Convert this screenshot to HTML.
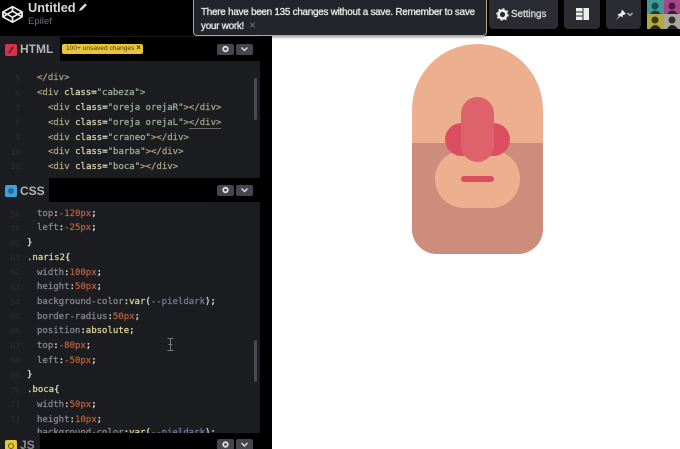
<!DOCTYPE html>
<html lang="en">
<head>
<meta charset="utf-8">
<title>Untitled</title>
<style>
html,body{margin:0;padding:0;width:680px;height:449px;overflow:hidden;background:#000;font-family:"Liberation Sans",sans-serif}
.a{position:absolute}
#p{position:relative;width:680px;height:449px;overflow:hidden;background:#000;filter:blur(.35px)}
.l{position:absolute;margin-top:1px;white-space:pre;font:9px/14px "DejaVu Sans Mono","Liberation Mono",monospace;color:#8c8b92;-webkit-text-stroke:.25px currentColor}
.n{position:absolute;width:20px;text-align:right;left:0;margin-top:1px;font:8px/14px "DejaVu Sans Mono",monospace;color:#2c2d32}
.t{color:#a9a47f}.k{color:#d8d5ae}.s{color:#9db09b}.w{color:#e4e2d8}
.o{color:#b9603a}.c{color:#dcd79b}.v{color:#77799c}.p{color:#8b8790}
.hb{position:absolute;background:#44454d;border-radius:2px;width:17px;height:11px}
.btn{position:absolute;top:0;height:29px;background:#2b2c33;border-radius:0 0 4px 4px}
</style>
</head>
<body>
<div id="p">

<!-- logo -->
<svg class="a" style="left:2px;top:5px" width="21" height="18" viewBox="0 0 22 22" preserveAspectRatio="none" fill="none" stroke="#eee" stroke-width="1.9" stroke-linejoin="round">
<path d="M11 2 21 8.500V14.500L11 21 1 14.500V8.500Z"/><path d="M11 2V7.500M11 15V21M1 8.500 11 15 21 8.500M1 14.500 11 7.500 21 14.500"/>
</svg>
<div class="a" style="left:28px;top:0;font-size:12.800px;line-height:15px;font-weight:bold;color:#d8d8da">Untitled</div>
<svg class="a" style="left:78px;top:2px" width="10" height="10" viewBox="0 0 10 10"><path d="M1 9 2 6.500 7 1.500 9 3 4 8Z" fill="#ddd"/></svg>
<div class="a" style="left:28px;top:16px;font-size:9.500px;line-height:12px;color:#70717a">Epilef</div>

<!-- top buttons -->
<div class="btn" style="left:489px;width:69px"></div>
<svg class="a" style="left:496px;top:8px" width="13" height="13" viewBox="0 0 12 12"><circle cx="6" cy="6" r="3.600" fill="none" stroke="#eee" stroke-width="2.400"/><circle cx="6" cy="6" r="5" fill="none" stroke="#eee" stroke-width="1.600" stroke-dasharray="1.800 2.100"/></svg>
<div class="a" style="left:511px;top:8px;font-size:9.800px;line-height:13px;color:#d0d0d3;-webkit-text-stroke:.4px #d0d0d3">Settings</div>
<div class="btn" style="left:564px;width:36px"></div>
<svg class="a" style="left:576px;top:8px" width="13" height="12" viewBox="0 0 13 12"><path d="M0 0H13V12H0Z" fill="#eee"/><path d="M7 0V12M0 4H7M0 8H7" stroke="#2b2c33" stroke-width="1"/></svg>
<div class="btn" style="left:606px;width:35px"></div>
<svg class="a" style="left:615px;top:9px" width="18" height="12" viewBox="0 0 18 12"><path d="M1 11 4 7 2.500 5.500 6 4 7 .5 11 5 8 6 7.500 8.500 5.500 7Z" fill="#eee"/><path d="M12.500 4 15 6.500 17.500 4" fill="none" stroke="#bbb" stroke-width="1.300"/></svg>
<!-- avatar -->
<svg class="a" style="left:647px;top:0" width="33" height="29" viewBox="0 0 33 29">
<rect width="17" height="14" fill="#3f9a9a"/><rect x="17" width="16" height="14" fill="#a8488c"/><rect y="14" width="17" height="15" fill="#b5a83c"/><rect x="17" y="14" width="16" height="15" fill="#a8a8a0"/>
<circle cx="8" cy="6" r="3.500" fill="#1d4a50"/><path d="M3 14Q8 7 14 14Z" fill="#1d3a40"/>
<circle cx="25" cy="6" r="3.500" fill="#4a1a40"/><path d="M20 14Q25 7 31 14Z" fill="#3e1c3a"/>
<circle cx="8" cy="20" r="3.500" fill="#3c3818"/><path d="M3 29Q8 21 14 29Z" fill="#2e2c14"/>
<circle cx="25" cy="20" r="3.500" fill="#303030"/><path d="M20 29Q25 21 31 29Z" fill="#222"/>
</svg>

<!-- editor column -->
<div class="a" style="left:0;top:61px;width:260px;height:388px;background:#1c1d21"></div>
<div class="a" style="left:0;top:36px;width:260px;height:1px;background:#1a1a1d"></div>

<!-- HTML header -->
<div class="a" style="left:0;top:37px;width:60px;height:24px;background:#1c1d21"></div>
<div class="a" style="left:5px;top:44px;width:12px;height:12px;border-radius:2px;background:#d8314c"></div>
<svg class="a" style="left:5px;top:44px" width="12" height="12"><path d="M4 9 8 3" stroke="#5c1020" stroke-width="1.500"/></svg>
<div class="a" style="left:20px;top:42px;font-size:12px;line-height:15px;font-weight:bold;color:#b4b4b8">HTML</div>
<div class="a" style="left:62px;top:44px;width:81px;height:10px;border-radius:2px;background:#e9c53e;color:#4a3c10;font-size:6.600px;line-height:10px;padding-left:4px;box-sizing:border-box;white-space:nowrap">100+ unsaved changes <b style="font-size:8px;line-height:8px">×</b></div>
<div class="hb" style="left:217px;top:44px"></div><div class="hb" style="left:236px;top:44px"></div>

<!-- HTML code -->
<div class="n" style="top:71px">5</div>
<div class="l" style="left:37px;top:70px"><span class="t">&lt;/div&gt;</span></div>
<div class="n" style="top:86px">6</div>
<div class="l" style="left:37px;top:85px"><span class="t">&lt;div</span> <span class="k">class</span><span class="w">=</span><span class="s">"cabeza"</span><span class="t">&gt;</span></div>
<div class="n" style="top:101px">7</div>
<div class="l" style="left:48px;top:100px"><span class="t">&lt;div</span> <span class="k">class</span><span class="w">=</span><span class="s">"oreja orejaR"</span><span class="t">&gt;&lt;/div&gt;</span></div>
<div class="n" style="top:115px">8</div>
<div class="l" style="left:48px;top:115px"><span class="t">&lt;div</span> <span class="k">class</span><span class="w">=</span><span class="s">"oreja orejaL"</span><span class="t">&gt;</span><span class="t" style="border-bottom:1px solid #66666c">&lt;/div&gt;</span></div>
<div class="n" style="top:130px">9</div>
<div class="l" style="left:48px;top:130px"><span class="t">&lt;div</span> <span class="k">class</span><span class="w">=</span><span class="s">"craneo"</span><span class="t">&gt;&lt;/div&gt;</span></div>
<div class="n" style="top:145px">10</div>
<div class="l" style="left:48px;top:144px"><span class="t">&lt;div</span> <span class="k">class</span><span class="w">=</span><span class="s">"barba"</span><span class="t">&gt;&lt;/div&gt;</span></div>
<div class="n" style="top:159px">11</div>
<div class="l" style="left:48px;top:159px"><span class="t">&lt;div</span> <span class="k">class</span><span class="w">=</span><span class="s">"boca"</span><span class="t">&gt;&lt;/div&gt;</span></div>
<div class="a" style="left:254px;top:78px;width:3px;height:42px;background:#4a4b50;border-radius:2px"></div>

<!-- CSS header -->
<div class="a" style="left:0;top:178px;width:260px;height:24px;background:#1c1d21"></div>
<div class="a" style="left:49px;top:178px;width:211px;height:24px;background:#000"></div>
<div class="a" style="left:5px;top:185px;width:12px;height:12px;border-radius:2px;background:#3aa3dc"></div>
<div class="a" style="left:8px;top:188px;width:6px;height:6px;border-radius:3px;background:#1f6e9c"></div>
<div class="a" style="left:20px;top:184px;font-size:12px;line-height:15px;font-weight:bold;color:#b4b4b8">CSS</div>
<div class="hb" style="left:217px;top:185px"></div><div class="hb" style="left:236px;top:185px"></div>

<!-- CSS code -->
<div class="n" style="top:207px">58</div>
<div class="l" style="left:37px;top:206px"><span class="p">top</span><span class="w">:</span><span class="o">-120px</span><span class="w">;</span></div>
<div class="n" style="top:221px">59</div>
<div class="l" style="left:37px;top:220px"><span class="p">left</span><span class="w">:</span><span class="o">-25px</span><span class="w">;</span></div>
<div class="n" style="top:236px">60</div>
<div class="l" style="left:27px;top:235px"><span class="w">}</span></div>
<div class="n" style="top:251px">61</div>
<div class="l" style="left:27px;top:250px"><span class="c">.naris2</span><span class="w">{</span></div>
<div class="n" style="top:265px">62</div>
<div class="l" style="left:37px;top:265px"><span class="p">width</span><span class="w">:</span><span class="o">100px</span><span class="w">;</span></div>
<div class="n" style="top:280px">63</div>
<div class="l" style="left:37px;top:279px"><span class="p">height</span><span class="w">:</span><span class="o">50px</span><span class="w">;</span></div>
<div class="n" style="top:295px">64</div>
<div class="l" style="left:37px;top:294px"><span class="p">background-color</span><span class="w">:</span><span class="c">var</span><span class="w">(</span><span class="v">--pieldark</span><span class="w">);</span></div>
<div class="n" style="top:309px">65</div>
<div class="l" style="left:37px;top:309px"><span class="p">border-radius</span><span class="w">:</span><span class="o">50px</span><span class="w">;</span></div>
<div class="n" style="top:324px">66</div>
<div class="l" style="left:37px;top:323px"><span class="p">position</span><span class="w">:</span><span class="c">absolute</span><span class="w">;</span></div>
<div class="n" style="top:339px">67</div>
<div class="l" style="left:37px;top:338px"><span class="p">top</span><span class="w">:</span><span class="o">-80px</span><span class="w">;</span></div>
<div class="n" style="top:353px">68</div>
<div class="l" style="left:37px;top:353px"><span class="p">left</span><span class="w">:</span><span class="o">-50px</span><span class="w">;</span></div>
<div class="n" style="top:368px">69</div>
<div class="l" style="left:27px;top:367px"><span class="w">}</span></div>
<div class="n" style="top:383px">70</div>
<div class="l" style="left:27px;top:382px"><span class="c">.boca</span><span class="w">{</span></div>
<div class="n" style="top:397px">71</div>
<div class="l" style="left:37px;top:397px"><span class="p">width</span><span class="w">:</span><span class="o">50px</span><span class="w">;</span></div>
<div class="n" style="top:412px">72</div>
<div class="l" style="left:37px;top:412px"><span class="p">height</span><span class="w">:</span><span class="o">10px</span><span class="w">;</span></div>
<div class="l" style="left:37px;top:425px"><span class="p">background-color</span><span class="w">:</span><span class="c">var</span><span class="w">(</span><span class="v">--pieldark</span><span class="w">);</span></div>
<div class="a" style="left:254px;top:340px;width:3px;height:42px;background:#4a4b50;border-radius:2px"></div>
<!-- I-beam cursor -->
<svg class="a" style="left:167px;top:338px" width="7" height="13" viewBox="0 0 7 13" fill="none" stroke="#77777a" stroke-width="1"><path d="M.5 .5H6.500M3.500 .5V12.500M.5 12.500H6.500M1.500 6.500H5.500"/></svg>

<!-- JS header -->
<div class="a" style="left:0;top:433px;width:260px;height:16px;background:#000"></div>
<div class="a" style="left:0;top:433px;width:40px;height:16px;background:#1c1d21"></div>
<div class="a" style="left:5px;top:440px;width:12px;height:12px;border-radius:2px;background:#e3c93b"></div>
<div class="a" style="left:8px;top:443px;width:6px;height:6px;border-radius:3px;border:1px solid #6c5c10;box-sizing:border-box"></div>
<div class="a" style="left:20px;top:438px;font-size:12px;line-height:15px;font-weight:bold;color:#8c8c90">JS</div>
<div class="hb" style="left:217px;top:439px"></div><div class="hb" style="left:236px;top:439px"></div>

<!-- panel button icons -->
<svg class="a" style="left:0;top:0;pointer-events:none" width="260" height="449" fill="none">
<circle cx="225.500" cy="49" r="2.300" stroke="#ddd" stroke-width="1.800"/><path d="M241.500 47.500 244.500 50.500 247.500 47.500" stroke="#ddd" stroke-width="1.400"/>
<circle cx="225.500" cy="190" r="2.300" stroke="#ddd" stroke-width="1.800"/><path d="M241.500 188.500 244.500 191.500 247.500 188.500" stroke="#ddd" stroke-width="1.400"/>
<circle cx="225.500" cy="444.500" r="2.300" stroke="#ddd" stroke-width="1.800"/><path d="M241.500 443 244.500 446 247.500 443" stroke="#ddd" stroke-width="1.400"/>
</svg>

<!-- preview -->
<div class="a" style="left:272px;top:36px;width:408px;height:413px;background:#fff"></div>
<div class="a" style="left:412px;top:44px;width:131px;height:210px;overflow:hidden;border-radius:65.500px 65.500px 25px 25px;background:#edb08e">
  <div class="a" style="left:0;top:99px;width:131px;height:111px;background:#cc8d7c"></div>
  <div class="a" style="left:23px;top:106px;width:85px;height:58px;border-radius:30px;background:#edb08e"></div>
  <div class="a" style="left:33px;top:79px;width:65px;height:33px;border-radius:16.500px;background:#dd4d61"></div>
  <div class="a" style="left:49px;top:53px;width:33px;height:65px;border-radius:16.500px;background:#de626a"></div>
  <div class="a" style="left:49px;top:132px;width:33px;height:6px;border-radius:3px;background:#dd4d61"></div>
</div>

<!-- toast -->
<div class="a" style="left:193px;top:-4px;width:294px;height:40px;box-sizing:border-box;background:#24252c;border:1.500px solid #b4ac78;border-radius:4px;box-shadow:0 1px 3px rgba(0,0,0,.45)"></div>
<div class="a" style="left:201px;top:6px;font-size:9.900px;line-height:13px;letter-spacing:-.25px;color:#e4e4e6;-webkit-text-stroke:.35px #e4e4e6;white-space:nowrap">There have been 135 changes without a save. Remember to save<br>your work! &nbsp;<span style="color:#72737a;-webkit-text-stroke:0;font-size:12px">×</span></div>

</div>
</body>
</html>
